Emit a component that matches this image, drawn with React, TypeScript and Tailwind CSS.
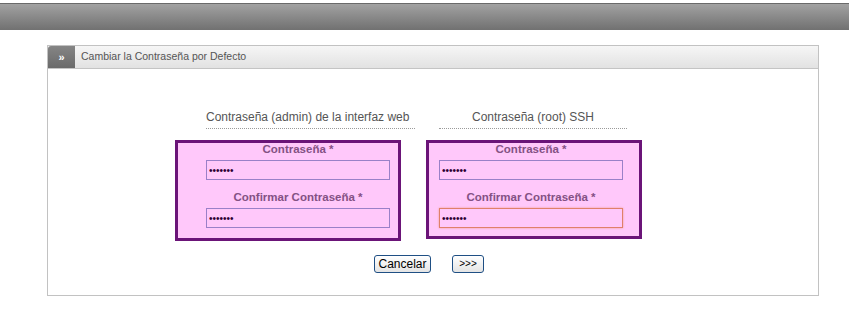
import React from "react";

function PassInput({ focus }: { focus?: boolean }) {
  return (
    <input
      type="password"
      readOnly
      value="1234567"
      className={
        "block h-[20px] w-[184px] px-[2px] bg-[#ffc8fa] text-[#2a0030] text-[10px] outline-none " +
        (focus
          ? "border border-[#e0806a] shadow-[0_0_2px_#f0a090]"
          : "border border-[#9a80c8]")
      }
      style={{ fontFamily: "'Liberation Sans', Arial, sans-serif" }}
    />
  );
}

function FormBox({ inputMl, widthCls, focusSecond }: { inputMl: string; widthCls: string; focusSecond?: boolean }) {
  return (
    <div className={"h-[101px] border-[3px] border-[#6b1478] bg-[#ffc8fa] " + widthCls}>
      <div className={"flex flex-col w-[184px] " + inputMl}>
        <div className="h-[13px] leading-[13px] text-center text-[11.5px] font-bold text-[#845184] whitespace-nowrap">
          Contraseña *
        </div>
        <div className="mt-[4px]">
          <PassInput />
        </div>
        <div className="h-[13px] mt-[11px] leading-[13px] text-center text-[11.5px] font-bold text-[#845184] whitespace-nowrap">
          Confirmar Contraseña *
        </div>
        <div className="mt-[4px]">
          <PassInput focus={focusSecond} />
        </div>
      </div>
    </div>
  );
}

export default function App() {
  return (
    <div
      className="w-[849px] h-[325px] bg-white overflow-hidden"
      style={{ fontFamily: "'Liberation Sans', Arial, sans-serif" }}
    >
      {/* top bar */}
      <div className="pt-[3px]">
        <div className="h-[1px] bg-[#6a6a6a]" />
        <div className="h-[26px] bg-gradient-to-b from-[#a2a2a2] to-[#717171]" />
      </div>

      {/* panel */}
      <div className="mt-[15px] ml-[47px] w-[772px] h-[251px] border border-[#c2c2c2] flex flex-col">
        <div className="h-[23px] flex border-b border-[#c4c4c4] bg-gradient-to-b from-[#f6f6f6] to-[#e2e2e2]">
          <div className="w-[27px] h-full rounded-tl-[3px] bg-gradient-to-b from-[#858585] to-[#6a6a6a] flex items-center justify-center text-white text-[11px] font-bold leading-none">
            »
          </div>
          <div className="pl-[6px] flex items-center text-[10.5px] text-[#555555]">
            Cambiar la Contraseña por Defecto
          </div>
        </div>

        <div className="flex-1 flex flex-col">
          <div className="flex pl-[127px] pt-[39px]">
            {/* left column */}
            <div className="flex flex-col w-[240px]">
              <div className="ml-[31px] w-[209px] h-[21px] leading-[18px] border-b border-dotted border-[#9a9a9a] text-[12px] text-[#555555] whitespace-nowrap">
                Contraseña (admin) de la interfaz web
              </div>
              <div className="mt-[11px]">
                <FormBox inputMl="ml-[28px]" widthCls="w-[226px]" />
              </div>
            </div>
            {/* right column */}
            <div className="flex flex-col ml-[11px] w-[216px]">
              <div className="ml-[13px] w-[188px] h-[21px] leading-[18px] border-b border-dotted border-[#9a9a9a] text-[12px] text-[#555555] text-center whitespace-nowrap">
                Contraseña (root) SSH
              </div>
              <div className="mt-[11px]">
                <FormBox inputMl="ml-[10px]" widthCls="w-[216px] !h-[99px]" focusSecond />
              </div>
            </div>
          </div>

          <div className="flex pl-[326px] mt-[14px] gap-[21px]">
            <button className="h-[18px] w-[57px] border border-[#1f4f84] rounded-[3px] bg-gradient-to-b from-white to-[#e4e4e4] text-[12px] text-black leading-none">
              Cancelar
            </button>
            <button className="h-[18px] w-[32px] border border-[#1f4f84] rounded-[3px] bg-gradient-to-b from-white to-[#e4e4e4] text-[10px] text-black leading-none">
              &gt;&gt;&gt;
            </button>
          </div>
        </div>
      </div>
    </div>
  );
}
